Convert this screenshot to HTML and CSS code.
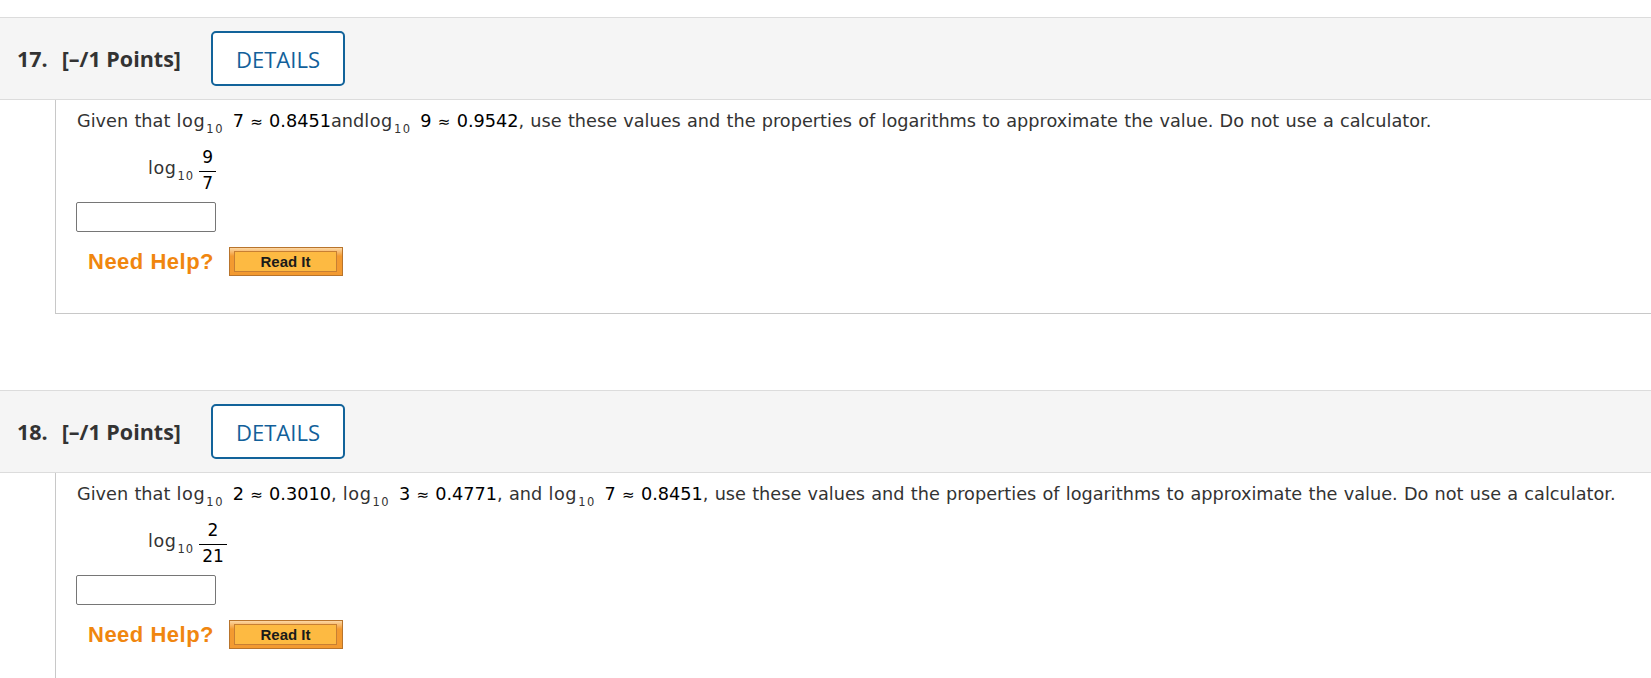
FILE: index.html
```html
<!DOCTYPE html>
<html>
<head>
<meta charset="utf-8">
<link rel="stylesheet" href="styles.css">
</head>
<body>
<div class="question">
  <div class="q-head">
    <span class="q-num">17.</span>
    <span class="q-pts">[–/1 Points]</span>
    <button class="details">DETAILS</button>
  </div>
  <div class="q-body">
    <p class="prompt">Given that <span class="fn">log<sub>10</sub></span> <span class="num">7</span> <span class="rel">≈</span> <span class="num">0.8451</span>and<span class="fn">log<sub>10</sub></span> <span class="num">9</span> <span class="rel">≈</span> <span class="num">0.9542</span>, use these values and the properties of logarithms to approximate the value. Do not use a calculator.</p>
    <div class="display">
      <span class="fn">log<sub>10</sub></span>
      <span class="frac"><span class="top num">9</span><span class="bot num">7</span></span>
    </div>
    <input class="answer" type="text">
    <div class="help">
      <span class="need">Need Help?</span>
      <span class="readit"><span class="readit-in">Read It</span></span>
    </div>
  </div>
</div>

<div class="question">
  <div class="q-head">
    <span class="q-num">18.</span>
    <span class="q-pts">[–/1 Points]</span>
    <button class="details">DETAILS</button>
  </div>
  <div class="q-body">
    <p class="prompt">Given that <span class="fn">log<sub>10</sub></span> <span class="num">2</span> <span class="rel">≈</span> <span class="num">0.3010</span>, <span class="fn">log<sub>10</sub></span> <span class="num">3</span> <span class="rel">≈</span> <span class="num">0.4771</span>, and <span class="fn">log<sub>10</sub></span> <span class="num">7</span> <span class="rel">≈</span> <span class="num">0.8451</span>, use these values and the properties of logarithms to approximate the value. Do not use a calculator.</p>
    <div class="display">
      <span class="fn">log<sub>10</sub></span>
      <span class="frac"><span class="top num">2</span><span class="bot num">21</span></span>
    </div>
    <input class="answer" type="text">
    <div class="help">
      <span class="need">Need Help?</span>
      <span class="readit"><span class="readit-in">Read It</span></span>
    </div>
  </div>
</div>
</body>
</html>
```

FILE: styles.css
```css
html, body {
  margin: 0;
  padding: 0;
  background: #fff;
}
body {
  padding-top: 17px;
  font-family: "DejaVu Sans", Verdana, sans-serif;
  color: #333;
}
.question {
  margin-bottom: 76px;
}
.q-head {
  display: flex;
  align-items: center;
  background: #f5f5f5;
  border-top: 1px solid #dcdcdc;
  border-bottom: 1px solid #dcdcdc;
  padding: 13px 0 13px 17px;
  height: 55px;
}
.q-num, .q-pts {
  font-family: "Open Sans", sans-serif;
  font-weight: 700;
  font-size: 21.5px;
  color: #333;
}
.q-pts {
  margin-left: 14px;
}
.details {
  margin-left: 30px;
  width: 134px;
  height: 55px;
  box-sizing: border-box;
  border: 2px solid #12639a;
  border-radius: 5px;
  background: #fff;
  color: #12609a;
  font-family: "Open Sans", sans-serif;
  font-size: 22px;
  padding: 0;
}
.q-body {
  margin-left: 55px;
  border-left: 1px solid #c8c8c8;
  border-bottom: 1px solid #c8c8c8;
  padding: 9px 0 37px 21px;
}
.prompt {
  margin: 0;
  font-size: 17.7px;
  line-height: 24px;
  word-spacing: 0.6px;
}
.fn {
  letter-spacing: 0.6px;
}
.num, .rel {
  color: #000;
}
.rel {
  font-size: 15px;
}
sub {
  font-size: 11.5px;
  vertical-align: -6px;
  line-height: 0;
  margin-left: 1px;
  letter-spacing: 1.5px;
}
.prompt sub {
  margin-right: 2.5px;
}
.display {
  display: flex;
  align-items: center;
  margin: 13px 0 0 71px;
  font-size: 17.5px;
  height: 46px;
}
.display .fn {
  position: relative;
  top: -2px;
  margin-right: 5px;
}
.display .fn sub {
  letter-spacing: 1px;
}
.frac {
  display: inline-flex;
  flex-direction: column;
  align-items: center;
  font-size: 17px;
  line-height: 20px;
}
.frac .top {
  border-bottom: 1px solid #000;
  padding: 0 3px 4px;
  align-self: stretch;
  text-align: center;
}
.frac .bot {
  padding: 1px 3px 0;
}
.answer {
  display: block;
  margin: 9px 0 0 -1px;
  width: 140px;
  height: 30px;
  box-sizing: border-box;
  border: 1px solid #767676;
  border-radius: 2px;
  padding: 0;
}
.help {
  display: flex;
  align-items: center;
  margin-top: 15px;
  margin-left: 11px;
}
.need {
  font-family: "Liberation Sans", Arial, sans-serif;
  font-weight: 700;
  font-size: 22px;
  color: #f0860f;
  letter-spacing: 0.5px;
}
.readit {
  margin-left: 15px;
  width: 114px;
  height: 29px;
  box-sizing: border-box;
  border: 1px solid #b8742c;
  background: linear-gradient(#fcd7a4 0, #f39a30 30%, #f39a30 100%);
  padding: 3px 5px 3px 4px;
  display: flex;
}
.readit-in {
  flex: 1;
  border: 1px solid #c77f33;
  background: #fdba42;
  font-family: "Liberation Sans", Arial, sans-serif;
  font-weight: 700;
  font-size: 15px;
  color: #1a1a1a;
  display: flex;
  align-items: center;
  justify-content: center;
}
```
